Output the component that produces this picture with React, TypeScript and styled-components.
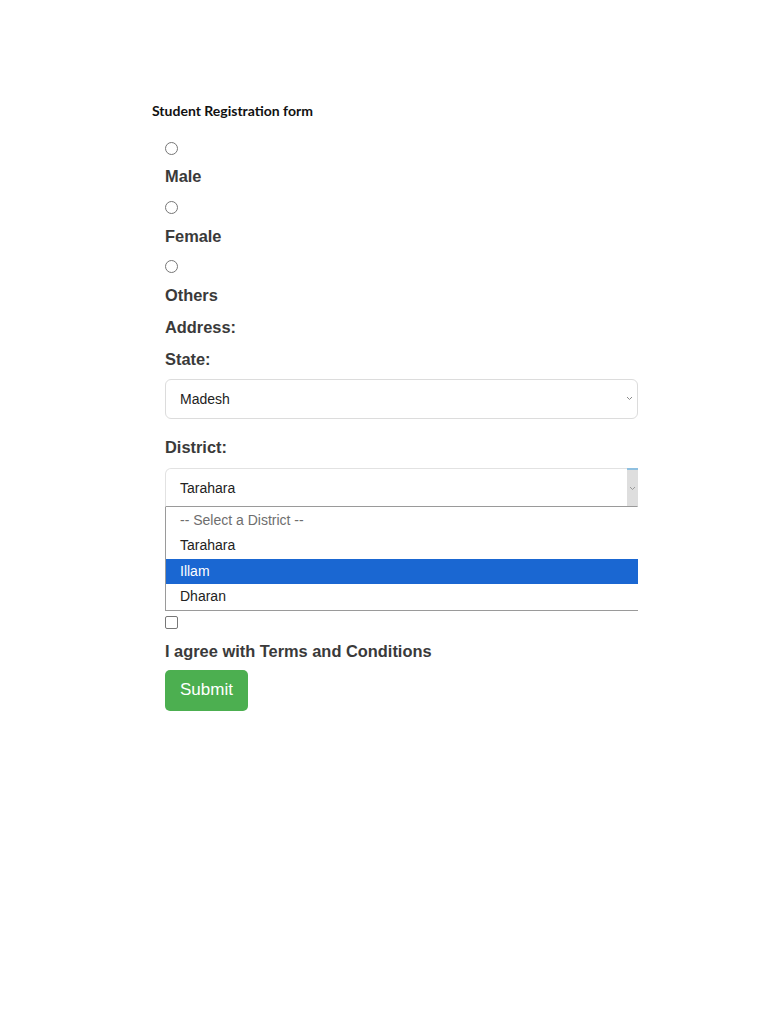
import React from "react";
import styled, { createGlobalStyle } from "styled-components";

const Global = createGlobalStyle`
  html, body { margin: 0; padding: 0; background: #ffffff; }
  body { width: 768px; height: 1024px; }
`;

const Page = styled.div`
  padding: 101px 0 0 152px;
  font-family: "Liberation Sans", Arial, sans-serif;
  color: #333333;
`;

const Title = styled.h1`
  margin: 0;
  font-family: Lato, "Open Sans", sans-serif;
  font-weight: 700;
  font-size: 14px;
  line-height: 20px;
  color: #111111;
`;

const Form = styled.form`
  display: flex;
  flex-direction: column;
  align-items: flex-start;
  padding: 21px 0 0 13px;
  width: 473px;
`;

const RadioCircle = styled.span<{ $gap: number }>`
  display: block;
  box-sizing: border-box;
  width: 13px;
  height: 13px;
  border: 1px solid #767676;
  border-radius: 50%;
  margin-top: ${(p) => p.$gap}px;
`;

const Label = styled.label<{ $gap: number }>`
  display: block;
  margin-top: ${(p) => p.$gap}px;
  font-weight: 700;
  font-size: 16.4px;
  line-height: 20px;
  color: #3a3a3a;
`;

const SelectBox = styled.div<{ $gap: number; $open?: boolean }>`
  position: relative;
  box-sizing: border-box;
  width: 473px;
  height: ${(p) => (p.$open ? 39 : 40)}px;
  margin-top: ${(p) => p.$gap}px;
  display: flex;
  align-items: center;
  padding-left: 14px;
  border: 1px solid ${(p) => (p.$open ? "#e2e2e2" : "#dcdcdc")};
  border-bottom-color: ${(p) => (p.$open ? "#9a9a9a" : "#dcdcdc")};
  border-radius: ${(p) => (p.$open ? "6px 0 0 0" : "6px")};
  font-size: 14px;
  color: #222222;
  background: #ffffff;
`;

const Chevron = styled.svg`
  position: absolute;
  right: 4px;
  top: 50%;
  margin-top: -3px;
`;

const ScrollStrip = styled.div`
  position: absolute;
  right: -1px;
  top: -1px;
  bottom: 0;
  width: 11px;
  background: #dedede;
  display: flex;
  align-items: center;
  justify-content: center;
  border-top: 2px solid #8fc0e0;
`;

const ListBox = styled.ul`
  box-sizing: border-box;
  width: 473px;
  margin: 0;
  padding: 1px 0 0 0;
  list-style: none;
  border-left: 1px solid #9a9a9a;
  border-bottom: 1px solid #9a9a9a;
`;

const Option = styled.li<{ $active?: boolean; $placeholder?: boolean }>`
  height: 25.4px;
  line-height: 25.4px;
  padding-left: 14px;
  font-size: 14px;
  background: ${(p) => (p.$active ? "#1a67d2" : "transparent")};
  color: ${(p) => (p.$active ? "#ffffff" : p.$placeholder ? "#6e6e6e" : "#222222")};
`;

const CheckBox = styled.span`
  display: block;
  box-sizing: border-box;
  width: 13px;
  height: 13px;
  margin-top: 5px;
  border: 1px solid #777777;
  border-radius: 2px;
`;

const Submit = styled.button`
  margin-top: 9px;
  height: 41px;
  padding: 0 15px;
  border: none;
  border-radius: 5px;
  background: #4caf50;
  color: #ffffff;
  font-family: "Liberation Sans", Arial, sans-serif;
  font-size: 17px;
  cursor: pointer;
`;

const ChevronIcon = () => (
  <Chevron width="7" height="5" viewBox="0 0 7 5">
    <path d="M1 1 L3.5 3.5 L6 1" fill="none" stroke="#8a8a8a" strokeWidth="1" />
  </Chevron>
);

export default function App() {
  return (
    <>
      <Global />
      <Page>
        <Title>Student Registration form</Title>
        <Form onSubmit={(e) => e.preventDefault()}>
          <RadioCircle $gap={0} />
          <Label $gap={11}>Male</Label>
          <RadioCircle $gap={15} />
          <Label $gap={12}>Female</Label>
          <RadioCircle $gap={14} />
          <Label $gap={12}>Others</Label>
          <Label $gap={12}>Address:</Label>
          <Label $gap={12}>State:</Label>
          <SelectBox $gap={10}>
            Madesh
            <ChevronIcon />
          </SelectBox>
          <Label $gap={18}>District:</Label>
          <SelectBox $gap={11} $open>
            Tarahara
            <ScrollStrip>
              <svg width="7" height="5" viewBox="0 0 7 5">
                <path d="M1 1 L3.5 3.5 L6 1" fill="none" stroke="#9a9a9a" strokeWidth="1" />
              </svg>
            </ScrollStrip>
          </SelectBox>
          <ListBox>
            <Option $placeholder>-- Select a District --</Option>
            <Option>Tarahara</Option>
            <Option $active>Illam</Option>
            <Option>Dharan</Option>
          </ListBox>
          <CheckBox />
          <Label $gap={12}>I agree with Terms and Conditions</Label>
          <Submit type="submit">Submit</Submit>
        </Form>
      </Page>
    </>
  );
}
